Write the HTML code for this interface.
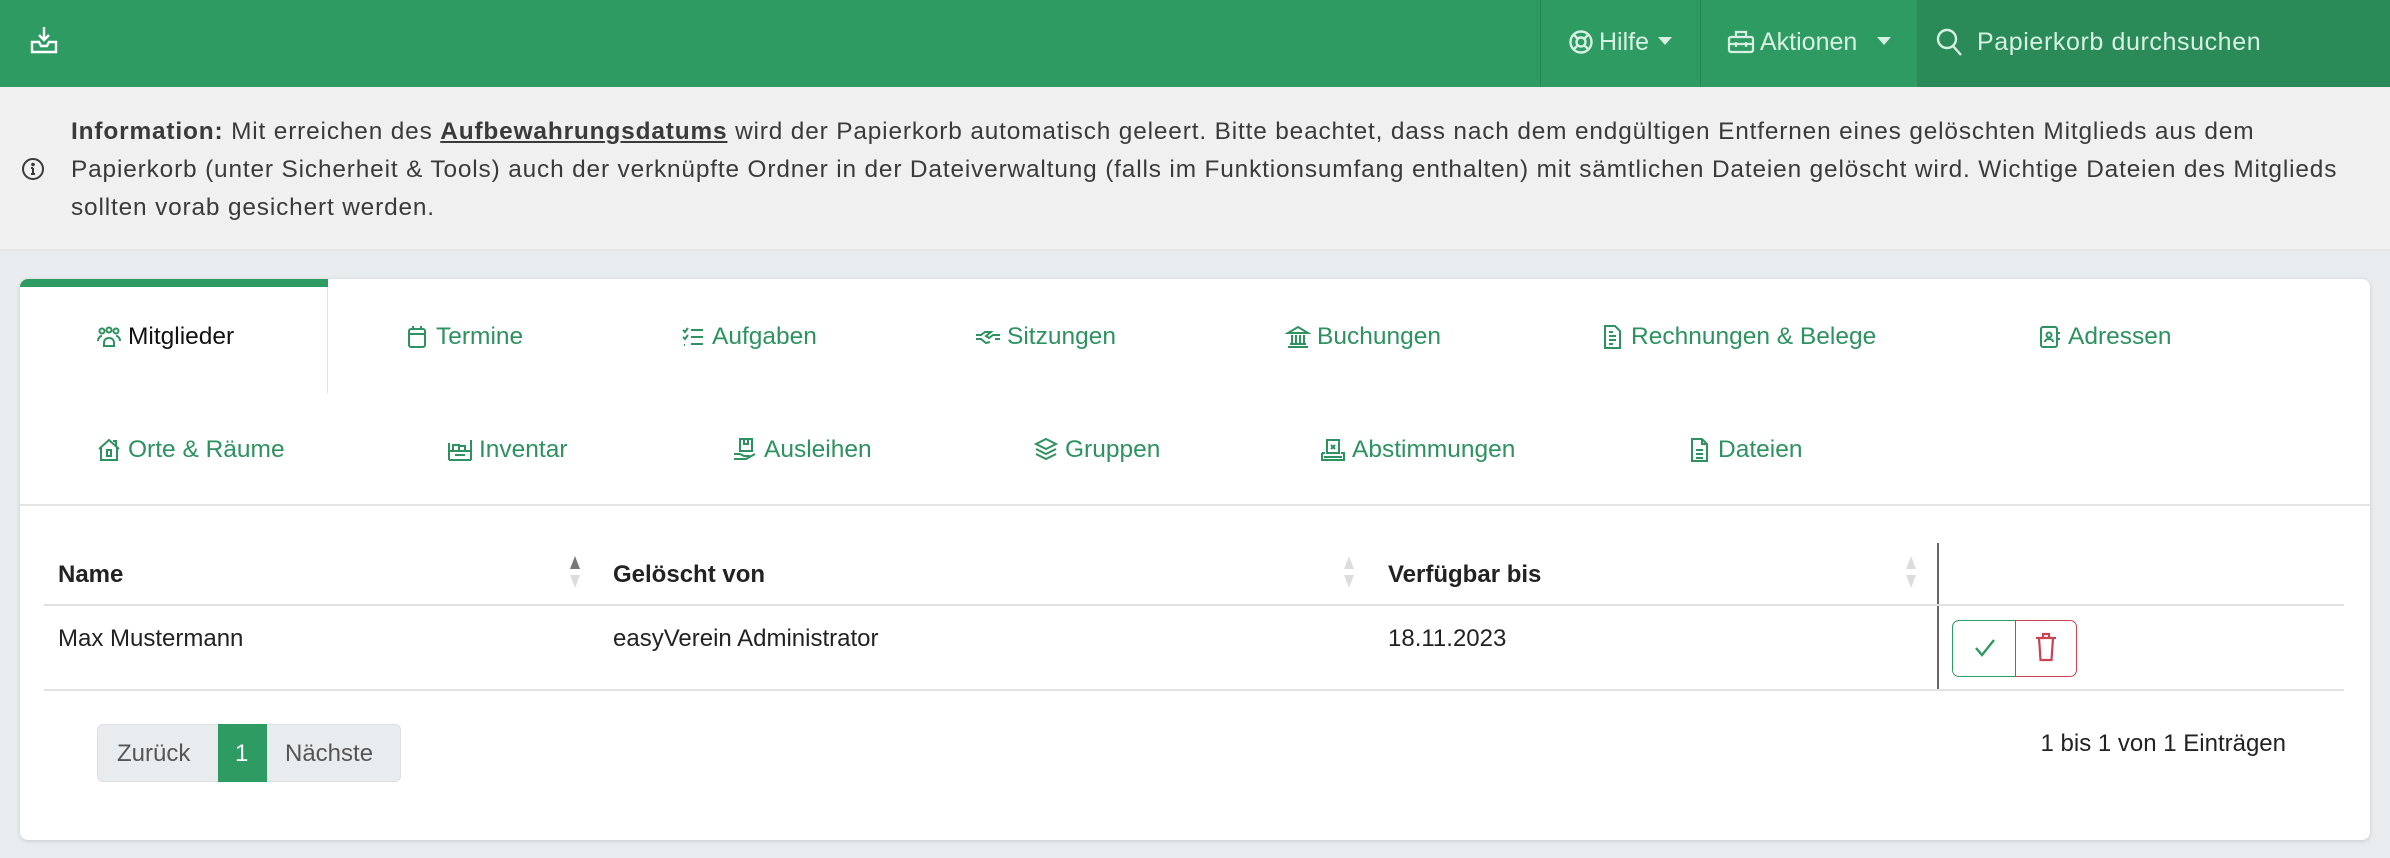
<!DOCTYPE html>
<html><head><meta charset="utf-8"><style>
*{box-sizing:border-box;margin:0;padding:0}
body{width:2390px;height:858px;background:#e9ecef;font-family:"Liberation Sans",sans-serif;color:#222;position:relative;overflow:hidden}
.abs{position:absolute;white-space:nowrap}
.nav{position:absolute;left:0;top:0;width:2390px;height:87px;background:#2e9b63}
.nav .t{color:#d8f0e2;font-size:25px;top:28px}
.info{position:absolute;left:0;top:87px;width:2390px;height:164px;background:#f0f0f0;border-bottom:2px solid #e3e5e7}
.info .l{font-size:24.4px;letter-spacing:0.85px;color:#3a3a3a;left:71px}
.card{position:absolute;left:20px;top:279px;width:2350px;height:561px;background:#fff;border-radius:8px;box-shadow:0 1px 4px rgba(0,0,0,.15);overflow:hidden}
.tab{color:#2e9160;font-size:24.5px;display:flex;align-items:center;gap:6px}
.tab svg{width:26px;height:26px;stroke:#2e9160;fill:none;stroke-width:2}
.th{font-weight:bold;font-size:24px;color:#222}
.td{font-size:24px;color:#222}
</style></head><body>
<div class="nav">
 <svg class="abs" style="left:29px;top:25px" width="30" height="30" viewBox="0 0 30 30" fill="none" stroke="#fff" stroke-width="2.4"><path d="M15 2v13M10 10l5 5 5-5"/><path d="M3 17v10h24V17H20l-2 4h-6l-2-4z"/></svg>
 <div class="abs" style="left:1540px;top:0;width:1px;height:87px;background:#27854f"></div>
 <div class="abs" style="left:1700px;top:0;width:1px;height:87px;background:#27854f"></div>
 <div class="abs" style="left:1917px;top:0;width:473px;height:87px;background:#2a8b59"></div>
 <svg class="abs" style="left:1568px;top:29px" width="26" height="26" viewBox="0 0 26 26" fill="none" stroke="#d8f0e2" stroke-width="2.4"><circle cx="13" cy="13" r="10.5"/><circle cx="13" cy="13" r="4.5"/><path d="M6 6l4 4M20 6l-4 4M6 20l4-4M20 20l-4-4"/></svg>
 <div class="abs t" style="left:1599px">Hilfe</div>
 <svg class="abs" style="left:1658px;top:37px" width="14" height="9"><path d="M0 0h14L7 8z" fill="#d8f0e2"/></svg>
 <svg class="abs" style="left:1727px;top:29px" width="28" height="26" viewBox="0 0 28 26" fill="none" stroke="#d8f0e2" stroke-width="2.2"><rect x="2" y="8" width="24" height="15" rx="2"/><path d="M9 8V3h10v5M2 15h24M9 13v5M19 13v5"/></svg>
 <div class="abs t" style="left:1760px">Aktionen</div>
 <svg class="abs" style="left:1877px;top:37px" width="14" height="9"><path d="M0 0h14L7 8z" fill="#d8f0e2"/></svg>
 <svg class="abs" style="left:1936px;top:27px" width="28" height="30" viewBox="0 0 28 30" fill="none" stroke="#d8f0e2" stroke-width="2.4"><circle cx="11" cy="12" r="9"/><path d="M17 19l8 9"/></svg>
 <div class="abs t" style="left:1977px;letter-spacing:0.6px">Papierkorb durchsuchen</div>
</div>
<div class="info">
 <svg class="abs" style="left:21px;top:70px" width="24" height="24" viewBox="0 0 24 24" fill="none" stroke="#3a3a3a" stroke-width="2"><circle cx="12" cy="12" r="10"/><path d="M12 11v6M10 17h4M10 11h2"/><circle cx="12" cy="7.5" r="0.8" fill="#3a3a3a"/></svg>
 <div class="abs l" style="top:31px"><b>Information:</b> Mit erreichen des <b><u>Aufbewahrungsdatums</u></b> wird der Papierkorb automatisch geleert. Bitte beachtet, dass nach dem endgültigen Entfernen eines gelöschten Mitglieds aus dem</div>
 <div class="abs l" style="top:69px">Papierkorb (unter Sicherheit &amp; Tools) auch der verknüpfte Ordner in der Dateiverwaltung (falls im Funktionsumfang enthalten) mit sämtlichen Dateien gelöscht wird. Wichtige Dateien des Mitglieds</div>
 <div class="abs l" style="top:107px">sollten vorab gesichert werden.</div>
</div>
<div class="card">
 <div class="abs" style="left:0;top:0;width:308px;height:8px;background:#2e9b63"></div>
 <div class="abs" style="left:307px;top:8px;width:1px;height:106px;background:#e2e2e2"></div>
 <div class="abs" style="left:0;top:225px;width:2350px;height:2px;background:#e4e4e4"></div>
 <div class="abs tab" style="left:76px;top:44px;color:#111"><svg viewBox="0 0 26 26"><circle cx="6" cy="7" r="2.5"/><circle cx="13" cy="6" r="2.5"/><circle cx="20" cy="7" r="2.5"/><path d="M2 17c0-3 2-5 4-5M24 17c0-3-2-5-4-5M8 22v-3c0-3 2-5 5-5s5 2 5 5v3z"/></svg>Mitglieder</div>
 <div class="abs tab" style="left:384px;top:44px"><svg viewBox="0 0 26 26"><rect x="5" y="5" width="16" height="18" rx="2"/><path d="M9 2v4M17 2v4M5 10h16"/></svg>Termine</div>
 <div class="abs tab" style="left:660px;top:44px"><svg viewBox="0 0 26 26"><path d="M3 6l2 2 3-4M3 13l2 2 3-4M4 21h1M11 6h12M11 13h12M11 20h12"/></svg>Aufgaben</div>
 <div class="abs tab" style="left:955px;top:44px"><svg viewBox="0 0 26 26"><path d="M1 11h5l4-3h6l-5 4 3 2 4-3h7M1 15h5l5 4 4-1M20 15h5"/></svg>Sitzungen</div>
 <div class="abs tab" style="left:1265px;top:44px"><svg viewBox="0 0 26 26"><path d="M3 9L13 3l10 6zM3 23h20M5 20h16M7 11v8M11 11v8M15 11v8M19 11v8"/></svg>Buchungen</div>
 <div class="abs tab" style="left:1579px;top:44px"><svg viewBox="0 0 26 26"><path d="M6 2h10l5 5v17H6z"/><path d="M10 8h4M10 12h7M10 16h7M10 20h4"/></svg>Rechnungen &amp; Belege</div>
 <div class="abs tab" style="left:2016px;top:44px"><svg viewBox="0 0 26 26"><rect x="5" y="3" width="16" height="20" rx="2"/><circle cx="13" cy="11" r="2.5"/><path d="M9 18c0-2 2-3 4-3s4 1 4 3M23 8v2M23 14v2"/></svg>Adressen</div>
 <div class="abs tab" style="left:76px;top:157px"><svg viewBox="0 0 26 26"><path d="M3 12L13 3l10 9M5 10v13h16V10M17 4h3v5"/><rect x="11" y="13" width="4" height="6"/></svg>Orte &amp; Räume</div>
 <div class="abs tab" style="left:427px;top:157px"><svg viewBox="0 0 26 26"><path d="M2 6v17M24 3v20M2 23h22M2 14h22M6 14v-6h6v6M12 14v-5h6v5M8 18h10"/></svg>Inventar</div>
 <div class="abs tab" style="left:712px;top:157px"><svg viewBox="0 0 26 26"><rect x="8" y="2" width="12" height="12"/><path d="M12 2v5h4V2M2 17h6l4 2h6M2 22h12l9-5"/></svg>Ausleihen</div>
 <div class="abs tab" style="left:1013px;top:157px"><svg viewBox="0 0 26 26"><path d="M13 2l10 5-10 5L3 7zM3 12l10 5 10-5M3 17l10 5 10-5"/></svg>Gruppen</div>
 <div class="abs tab" style="left:1300px;top:157px"><svg viewBox="0 0 26 26"><rect x="7" y="3" width="12" height="13"/><path d="M11 8l4 4M15 8l-4 4M2 16v7h22v-7h-3M2 16h3M4 20h18"/></svg>Abstimmungen</div>
 <div class="abs tab" style="left:1666px;top:157px"><svg viewBox="0 0 26 26"><path d="M6 2h10l5 5v17H6z"/><path d="M16 2v5h5M10 13h7M10 17h7M10 21h7"/></svg>Dateien</div>

 <div class="abs th" style="left:38px;top:282px">Name</div>
 <div class="abs th" style="left:593px;top:282px">Gelöscht von</div>
 <div class="abs th" style="left:1368px;top:282px">Verfügbar bis</div>
 <svg class="abs" style="left:549px;top:277px" width="12" height="32"><path d="M6 0l5 13H1z" fill="#777"/><path d="M6 32l5-13H1z" fill="#ddd"/></svg>
 <svg class="abs" style="left:1323px;top:277px" width="12" height="32"><path d="M6 0l5 13H1z" fill="#ddd"/><path d="M6 32l5-13H1z" fill="#ddd"/></svg>
 <svg class="abs" style="left:1885px;top:277px" width="12" height="32"><path d="M6 0l5 13H1z" fill="#ddd"/><path d="M6 32l5-13H1z" fill="#ddd"/></svg>
 <div class="abs" style="left:1917px;top:264px;width:2px;height:147px;background:#666"></div>
 <div class="abs" style="left:24px;top:325px;width:2300px;height:2px;background:#e2e2e2"></div>
 <div class="abs" style="left:24px;top:410px;width:2300px;height:2px;background:#e2e2e2"></div>
 <div class="abs td" style="left:38px;top:346px">Max Mustermann</div>
 <div class="abs td" style="left:593px;top:346px">easyVerein Administrator</div>
 <div class="abs td" style="left:1368px;top:346px">18.11.2023</div>
 <div class="abs" style="left:1932px;top:341px;width:64px;height:57px;border:1.5px solid #2e9b63;border-radius:7px 0 0 7px"></div>
 <div class="abs" style="left:1995px;top:341px;width:62px;height:57px;border:1.5px solid #c94452;border-radius:0 7px 7px 0"></div>
 <svg class="abs" style="left:1953px;top:357px" width="24" height="24" viewBox="0 0 24 24" fill="none" stroke="#2e9b63" stroke-width="2.4"><path d="M3 12l6 7L21 4"/></svg>
 <svg class="abs" style="left:2013px;top:352px" width="26" height="32" viewBox="0 0 26 32" fill="none" stroke="#c94452" stroke-width="2.2"><path d="M3 7h20M10 7V3h6v4M6 7l1.5 22h11L20 7"/></svg>

 <div class="abs" style="left:77px;top:445px;width:304px;height:58px;background:#e9ecef;border:1px solid #dcdfe2;border-radius:6px"></div>
 <div class="abs" style="left:198px;top:445px;width:49px;height:58px;background:#2e9b63"></div>
 <div class="abs td" style="left:97px;top:461px;color:#555">Zurück</div>
 <div class="abs td" style="left:215px;top:461px;color:#fff">1</div>
 <div class="abs td" style="left:265px;top:461px;color:#555">Nächste</div>
 <div class="abs td" style="right:84px;top:451px">1 bis 1 von 1 Einträgen</div>
</div>
</body></html>
